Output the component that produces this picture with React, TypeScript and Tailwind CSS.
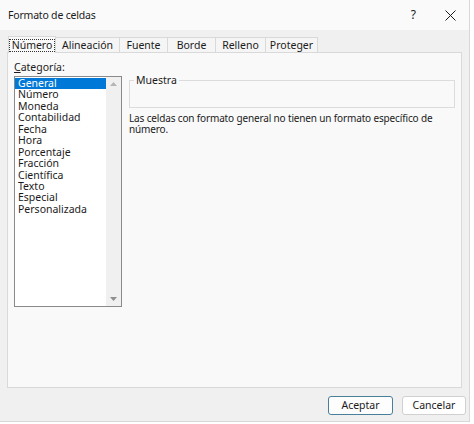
import React from 'react';

const tabs = [
  { label: 'Número', w: 'w-[48px]' },
  { label: 'Alineación', w: 'w-[64px]' },
  { label: 'Fuente', w: 'w-[48px]' },
  { label: 'Borde', w: 'w-[48px]' },
  { label: 'Relleno', w: 'w-[50px]' },
  { label: 'Proteger', w: 'w-[52px]' },
];

const categories = [
  'General',
  'Número',
  'Moneda',
  'Contabilidad',
  'Fecha',
  'Hora',
  'Porcentaje',
  'Fracción',
  'Científica',
  'Texto',
  'Especial',
  'Personalizada',
];

export default function App() {
  return (
    <div className="w-[474px] h-[424px] bg-white overflow-hidden font-['Noto_Sans',sans-serif] text-[#1b1b1b]">
      <div className="w-[470px] h-[422px] bg-[#f0f0f0] border-r border-b border-[#d8d8d8] flex flex-col">
        {/* title bar */}
        <div className="h-[30px] bg-[#fafafa] flex items-center pl-[8px] shrink-0">
          <span className="text-[10.5px] leading-none tracking-[-0.2px]">Formato de celdas</span>
          <span className="ml-auto text-[12px] leading-none mr-[29px]">?</span>
          <svg width="11" height="11" viewBox="0 0 11 11" className="mr-[13px]">
            <path d="M0.5 0.5 L10.5 10.5 M10.5 0.5 L0.5 10.5" stroke="#1b1b1b" strokeWidth="1" />
          </svg>
        </div>

        {/* tab strip */}
        <div className="h-[22px] px-[8px] flex items-end shrink-0">
          {tabs.map((t, i) =>
            i === 0 ? (
              <div
                key={t.label}
                className={`${t.w} h-[17px] bg-[#f9f9f9] border-t border-l border-r border-[#d9d9d9] -mb-px relative z-10 flex items-center justify-center`}
              >
                <span className="border border-dotted border-[#333] px-[2px] text-[10.5px] leading-[11px]">{t.label}</span>
              </div>
            ) : (
              <div
                key={t.label}
                className={`${t.w} h-[15px] bg-[#f5f5f5] border-t border-r border-[#d9d9d9] flex items-center justify-center text-[10.5px] leading-none`}
              >
                {t.label}
              </div>
            )
          )}
        </div>

        {/* panel */}
        <div className="mx-[7px] h-[336px] shrink-0 bg-[#f9f9f9] border border-[#d9d9d9] flex pl-[6px] pt-[8px] gap-[7px]">
          <div className="flex flex-col">
            <div className="text-[10.5px] leading-[12px] h-[15px]">
              <span className="underline underline-offset-[1px]">C</span>ategoría:
            </div>
            <div className="w-[108px] h-[231px] bg-white border border-[#8a8a8a] flex">
              <div className="flex-1 flex flex-col pt-px">
                {categories.map((c, i) => (
                  <div
                    key={c}
                    className={`h-[11.45px] leading-[11.45px] text-[10.5px] pl-[3px] ${
                      i === 0 ? 'bg-[#0078d7] text-white' : ''
                    }`}
                  >
                    {c}
                  </div>
                ))}
              </div>
              <div className="w-[15px] bg-[#f0f0f0] flex flex-col items-center justify-between py-[5px]">
                <svg width="7" height="4" viewBox="0 0 7 4">
                  <path d="M3.5 0 L7 4 L0 4 Z" fill="#b5b5b5" />
                </svg>
                <svg width="7" height="4" viewBox="0 0 7 4">
                  <path d="M0 0 L7 0 L3.5 4 Z" fill="#8f8f8f" />
                </svg>
              </div>
            </div>
          </div>

          <div className="flex-1 flex flex-col pr-[6px]">
            <div className="relative mt-[19px] h-[28px] border border-[#dcdcdc]">
              <span className="absolute -top-[7px] left-[4px] bg-[#f9f9f9] px-[2px] text-[10.5px] leading-[12px]">
                Muestra
              </span>
            </div>
            <p className="mt-[5px] text-[10px] leading-[11px] tracking-[-0.15px] whitespace-nowrap">
              Las celdas con formato general no tienen un formato específico de
              <br />
              número.
            </p>
          </div>
        </div>

        {/* footer */}
        <div className="flex-1 flex items-start justify-end pt-[8px] pr-[3px] gap-[9px]">
          <button className="w-[65px] h-[19px] rounded-[3px] bg-[#fdfdfd] border border-[#4a7f9a] text-[10.5px] leading-none">
            Aceptar
          </button>
          <button className="w-[64px] h-[19px] rounded-[3px] bg-white border border-[#d0d0d0] text-[10.5px] leading-none">
            Cancelar
          </button>
        </div>
      </div>
    </div>
  );
}
